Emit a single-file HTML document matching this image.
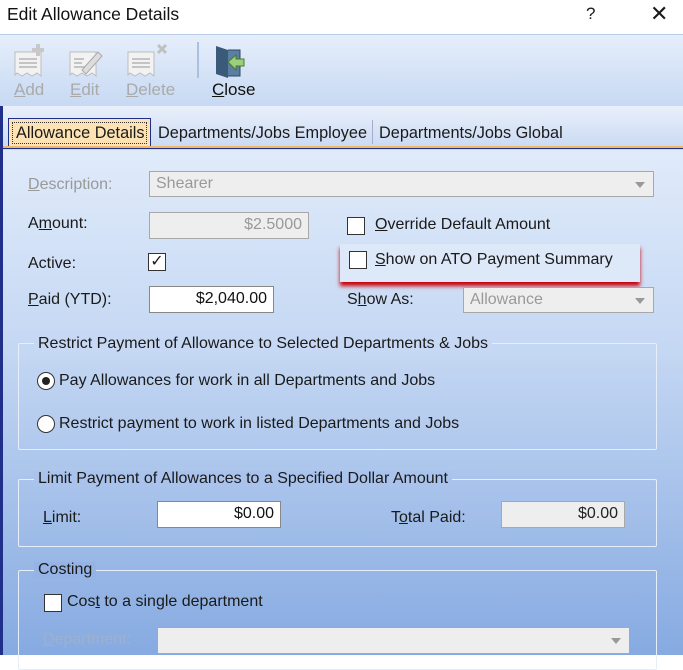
<!DOCTYPE html><html><head><style>
*{box-sizing:border-box}body{margin:0;width:683px;height:655px;overflow:hidden;font-family:"Liberation Sans",sans-serif;font-size:16px;color:#1a1a1a;position:relative;background:#fff}
.a{position:absolute;white-space:nowrap}
.f{position:absolute;border:1px solid #a8a8a8;background:#eee;color:#999;padding:0 6px;line-height:24px}
.w{background:#fff;color:#111;border-color:#888}
.r{text-align:right}
.cb{position:absolute;width:18px;height:18px;border:1px solid #333;background:#fff}
.g{position:absolute;border:1px solid #e6eef9;border-radius:2px}
.gt{position:absolute;padding:0 4px;line-height:16px}
.dis{color:#999}
u{text-decoration:underline}
.arr{position:absolute;right:8px;top:10px;width:0;height:0;border-left:5px solid transparent;border-right:5px solid transparent;border-top:6px solid #999}
</style></head><body>
<div class="a" style="left:7px;top:4px;font-size:17.5px;color:#111">Edit Allowance Details</div>
<div class="a" style="left:586px;top:4px;font-size:17px">?</div>
<div class="a" style="left:650px;top:1px;font-size:22px;font-weight:300">✕</div>
<div class="a" style="left:0;top:34px;width:683px;height:72px;background:linear-gradient(#e6eefb,#c7d9f3);border-top:1px solid #b9cde9"></div>
<svg class="a" style="left:12px;top:42px" width="240" height="40">
<g fill="#f2f2f2" stroke="#bdbdbd"><path d="M3 10h26v24l-4-3-5 3-5-3-5 3-5-3-2 2z"/><path d="M58 10h26v24l-4-3-5 3-5-3-5 3-5-3-2 2z"/><path d="M116 10h26v24l-4-3-5 3-5-3-5 3-5-3-2 2z"/></g>
<g stroke="#c4c4c4" stroke-width="2"><path d="M7 17h18M7 21h18M7 25h18M62 17h10M62 21h8M62 25h18M120 17h18M120 21h18M120 25h18"/></g>
<path d="M26 2v12M20 8h12" stroke="#c8c8c8" stroke-width="4"/>
<path d="M70 28l16-18 4 4-16 18z" fill="#ddd" stroke="#aaa"/>
<path d="M146 3l8 8M154 3l-8 8" stroke="#c0c0c0" stroke-width="3"/>
<rect x="185" y="0" width="2" height="36" fill="#aac0e0"/>
<path d="M204 4l12 4v28l-12-4z" fill="#3b5a7a"/><path d="M216 8h12v26h-12" fill="#5b7fa2" stroke="#2d4864"/>
<path d="M216 20l8-7v4h8v7h-8v4z" fill="#9bcf7a" stroke="#4a7a30"/>
</svg>
<div class="a" style="left:14px;top:80px;font-size:17px;color:#aaa"><u>A</u>dd</div>
<div class="a" style="left:70px;top:80px;font-size:17px;color:#aaa"><u>E</u>dit</div>
<div class="a" style="left:126px;top:80px;font-size:17px;color:#aaa"><u>D</u>elete</div>
<div class="a" style="left:212px;top:80px;font-size:17px;color:#111"><u>C</u>lose</div>
<div class="a" style="left:0;top:106px;width:683px;height:44px;background:linear-gradient(#e9f0fb,#c8d9f2)"></div>
<div class="a" style="left:0;top:106px;width:3px;height:549px;background:#1f2f8a"></div>
<div class="a" style="left:8px;top:118px;width:143px;height:29px;background:#fde3b3;border:1px solid #1f2f8a;border-bottom:none"></div>
<div class="a" style="left:12px;top:122px;width:135px;height:22px;border:1px dotted #333"></div>
<div class="a" style="left:16px;top:124px;font-size:16.3px">Allowance Details</div>
<div class="a" style="left:158px;top:124px;font-size:16.3px">Departments/Jobs Employee</div>
<div class="a" style="left:372px;top:120px;width:1px;height:24px;background:#aac"></div>
<div class="a" style="left:379px;top:124px;font-size:16.3px">Departments/Jobs Global</div>
<div class="a" style="left:3px;top:146px;width:680px;height:3px;background:#f2b86a;border-bottom:1px solid #1f2f8a"></div>
<div class="a" style="left:3px;top:150px;width:680px;height:505px;background:linear-gradient(#e0ebfa 0%,#c4d7f3 40%,#86aae1 100%)"></div>

<div class="a dis" style="left:28px;top:176px"><u>D</u>escription:</div>
<div class="f" style="left:149px;top:171px;width:505px;height:26px">Shearer<div class="arr"></div></div>
<div class="a" style="left:28px;top:215px">A<u>m</u>ount:</div>
<div class="f r" style="left:149px;top:212px;width:160px;height:27px">$2.5000</div>
<div class="cb" style="left:347px;top:217px"></div>
<div class="a" style="left:375px;top:216px"><u>O</u>verride Default Amount</div>
<div class="a" style="left:28px;top:255px">Active:</div>
<div class="cb" style="left:148px;top:253px;font-size:16px;line-height:15px;text-align:center">✓</div>
<div class="a" style="left:340px;top:244px;width:300px;height:38px;background:#dde8f8;box-shadow:0 4px 4px #c8000a"></div>
<div class="cb" style="left:349px;top:251px"></div>
<div class="a" style="left:375px;top:251px"><u>S</u>how on ATO Payment Summary</div>
<div class="a" style="left:28px;top:291px"><u>P</u>aid (YTD):</div>
<div class="f w r" style="left:149px;top:286px;width:125px;height:27px">$2,040.00</div>
<div class="a" style="left:347px;top:291px">S<u>h</u>ow As:</div>
<div class="f" style="left:463px;top:287px;width:191px;height:26px">Allowance<div class="arr"></div></div>

<div class="g" style="left:18px;top:343px;width:639px;height:107px"></div>
<div class="gt" style="left:34px;top:336px;background:#c6d8f3">Restrict Payment of Allowance to Selected Departments &amp; Jobs</div>
<div class="a" style="left:37px;top:372px;width:18px;height:18px;border-radius:50%;border:1px solid #333;background:#fff"><div style="margin:4px;width:8px;height:8px;border-radius:50%;background:#222"></div></div>
<div class="a" style="left:59px;top:372px">Pay Allowances for work in all Departments and Jobs</div>
<div class="a" style="left:37px;top:415px;width:18px;height:18px;border-radius:50%;border:1px solid #333;background:#fff"></div>
<div class="a" style="left:59px;top:415px">Restrict payment to work in listed Departments and Jobs</div>

<div class="g" style="left:18px;top:479px;width:639px;height:68px"></div>
<div class="gt" style="left:34px;top:471px;background:#a9c3ec">Limit Payment of Allowances to a Specified Dollar Amount</div>
<div class="a" style="left:43px;top:509px"><u>L</u>imit:</div>
<div class="f w r" style="left:157px;top:501px;width:124px;height:27px">$0.00</div>
<div class="a" style="left:391px;top:509px">T<u>o</u>tal Paid:</div>
<div class="f r" style="left:501px;top:501px;width:124px;height:27px;color:#222">$0.00</div>

<div class="g" style="left:18px;top:570px;width:639px;height:100px"></div>
<div class="gt" style="left:34px;top:562px;background:#95b4e5">Costing</div>
<div class="cb" style="left:44px;top:594px"></div>
<div class="a" style="left:67px;top:593px">Cos<u>t</u> to a single department</div>
<div class="a" style="left:43px;top:631px;color:#a0b0c8"><u>D</u>epartment:</div>
<div class="f" style="left:157px;top:627px;width:473px;height:27px"><div class="arr"></div></div>
</body></html>
